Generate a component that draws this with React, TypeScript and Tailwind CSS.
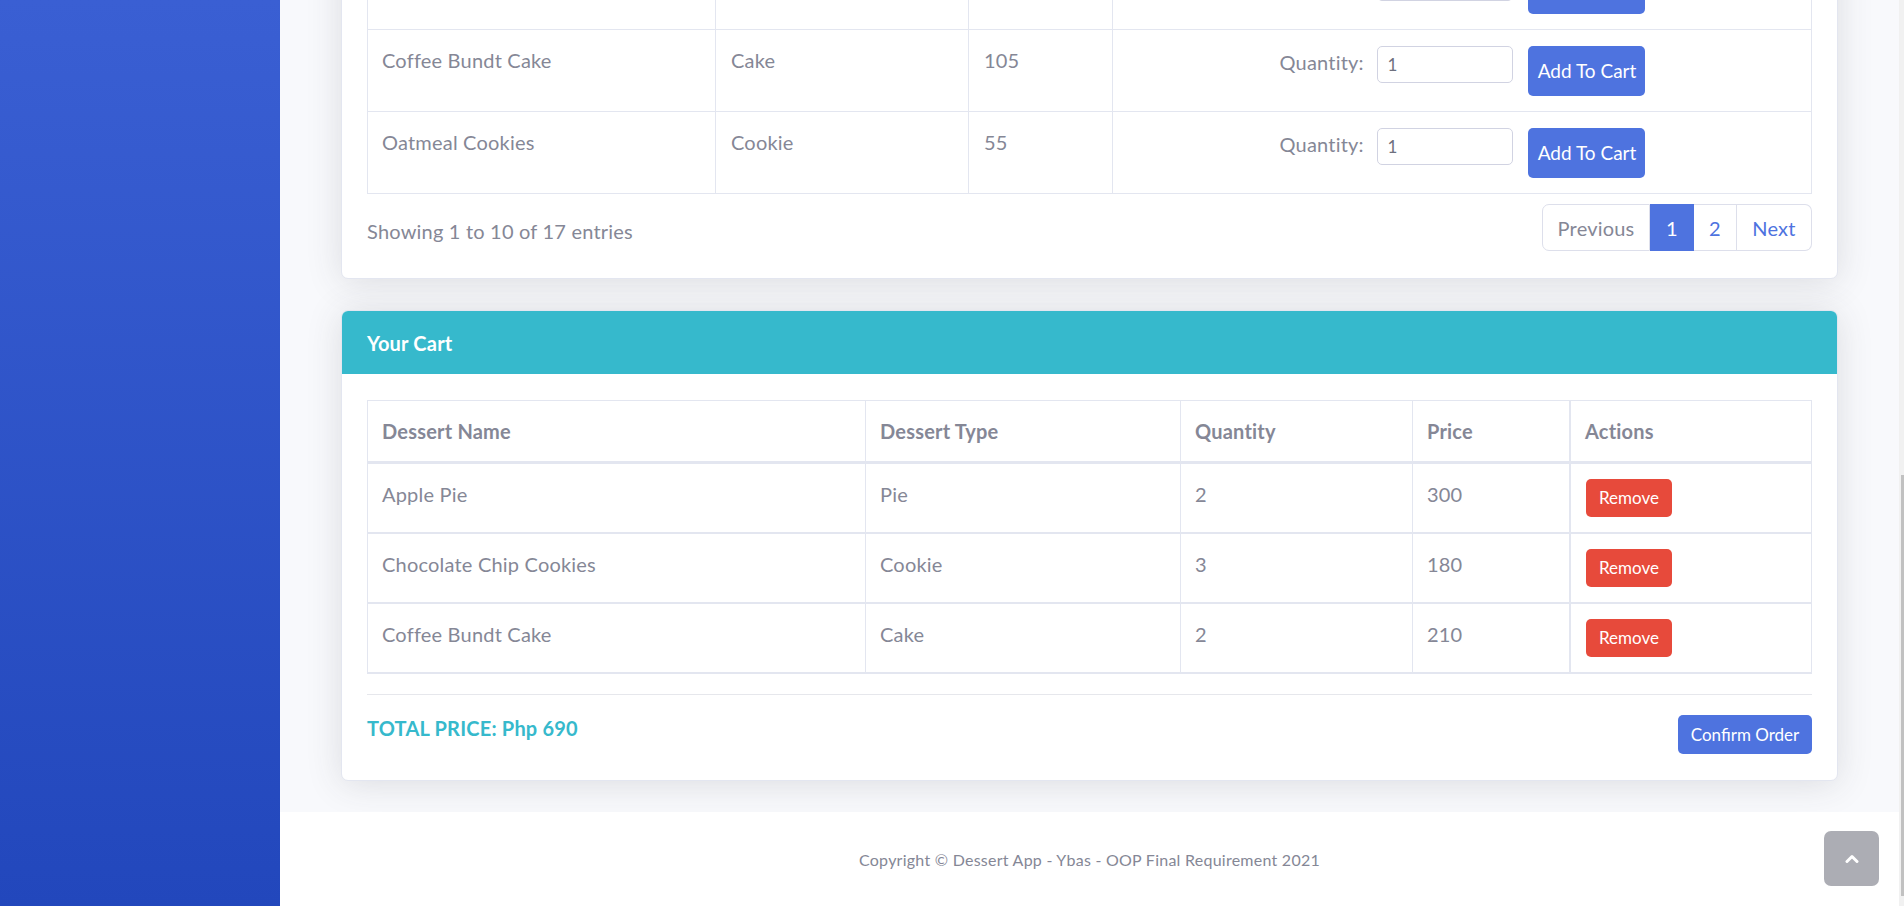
import React from "react";

const FONT = "font-['Lato','Liberation_Sans',sans-serif]";

type Product = { name: string; type: string; price: string; hidden?: boolean };

const products: Product[] = [
  { name: "", type: "", price: "", hidden: true },
  { name: "Coffee Bundt Cake", type: "Cake", price: "105" },
  { name: "Oatmeal Cookies", type: "Cookie", price: "55" },
];

type CartItem = { name: string; type: string; qty: string; price: string };

const cart: CartItem[] = [
  { name: "Apple Pie", type: "Pie", qty: "2", price: "300" },
  { name: "Chocolate Chip Cookies", type: "Cookie", qty: "3", price: "180" },
  { name: "Coffee Bundt Cake", type: "Cake", qty: "2", price: "210" },
];

function ProductRow({ p, last }: { p: Product; last: boolean }) {
  return (
    <div
      className={`grid grid-cols-[348px_253px_144px_1fr] ${
        last ? "h-[81px]" : "h-[82px] border-b border-[#e3e6f0]"
      }`}
    >
      <div className="border-r border-[#e3e6f0] pl-[14px] pt-[15px] leading-[30px]">{p.name}</div>
      <div className="border-r border-[#e3e6f0] pl-[15px] pt-[15px] leading-[30px]">{p.type}</div>
      <div className="border-r border-[#e3e6f0] pl-[15px] pt-[15px] leading-[30px]">{p.price}</div>
      <div className="flex items-start justify-center pt-[16px]">
        <span className={`mt-[1px] h-[30px] w-[81px] text-right leading-[30px] ${p.hidden ? "invisible" : ""}`}>
          {p.hidden ? "" : "Quantity:"}
        </span>
        <div className="ml-[16px] flex h-[37px] w-[136px] items-center rounded-[5px] border border-[#d1d3e2] bg-white pl-[10px] text-[17px] text-[#6e707e]">
          {p.hidden ? "" : "1"}
        </div>
        <button className="ml-[15px] h-[50px] w-[117px] rounded-[5px] bg-[#4e73df] pl-[2px] text-[19px] leading-[30px] tracking-normal text-white">
          {p.hidden ? "" : "Add To Cart"}
        </button>
      </div>
    </div>
  );
}

function CartRow({ c }: { c: CartItem }) {
  return (
    <div className="grid h-[70px] grid-cols-[498px_315px_232px_158px_1fr] border-b-2 border-[#e3e6f0]">
      <div className="border-r border-[#e3e6f0] pl-[14px] pt-[15px] leading-[30px]">{c.name}</div>
      <div className="border-r border-[#e3e6f0] pl-[14px] pt-[15px] leading-[30px]">{c.type}</div>
      <div className="border-r border-[#e3e6f0] pl-[14px] pt-[15px] leading-[30px]">{c.qty}</div>
      <div className="border-r-2 border-[#e3e6f0] pl-[14px] pt-[15px] leading-[30px]">{c.price}</div>
      <div className="pl-[15px] pt-[15px]">
        <button className="h-[38px] w-[86px] rounded-[5px] bg-[#e74a3b] text-[17px] leading-[26px] tracking-normal text-white">
          Remove
        </button>
      </div>
    </div>
  );
}

export default function App() {
  return (
    <div
      className={`flex h-[906px] w-full overflow-hidden bg-white text-[20px] tracking-[0.2px] text-[#858796] ${FONT}`}
    >
      {/* Sidebar */}
      <div className="h-full w-[280px] shrink-0 bg-gradient-to-b from-[#3a5fd3] to-[#2247bc]" />

      {/* Main column */}
      <div className="relative flex min-w-0 flex-1 flex-col">
        <div className="flex flex-col bg-[#f8f9fc] px-[61px] pb-[31px]">
          {/* Products card (scrolled) */}
          <div className="mt-[-79px] rounded-[7px] border border-[#e3e6f0] bg-white px-[25px] pb-[27px] pt-[25px] shadow-[0_3px_35px_0_rgba(58,59,69,0.15)]">
            <div className="border border-[#e3e6f0]">
              {products.map((p, i) => (
                <ProductRow key={i} p={p} last={i === products.length - 1} />
              ))}
            </div>
            <div className="mt-[10px] flex items-start justify-between">
              <div className="mt-[12px] leading-[30px]">Showing 1 to 10 of 17 entries</div>
              <div className="flex h-[47px]">
                <div className="flex w-[108px] items-center justify-center rounded-l-[7px] border border-[#dddfeb] bg-white text-[#858796]">
                  Previous
                </div>
                <div className="flex w-[44px] items-center justify-center border border-[#4e73df] bg-[#4e73df] text-white">
                  1
                </div>
                <div className="flex w-[43px] items-center justify-center border-y border-r border-[#dddfeb] bg-white text-[#4e73df]">
                  2
                </div>
                <div className="flex w-[75px] items-center justify-center rounded-r-[7px] border-y border-r border-[#dddfeb] bg-white text-[#4e73df]">
                  Next
                </div>
              </div>
            </div>
          </div>

          {/* Cart card */}
          <div className="mt-[31px] overflow-hidden rounded-[7px] border border-[#e3e6f0] bg-white shadow-[0_3px_35px_0_rgba(58,59,69,0.15)]">
            <div className="flex h-[63px] items-center bg-[#36b9cc] px-[25px] font-bold text-white">Your Cart</div>
            <div className="px-[25px] pb-[26px] pt-[26px]">
              <div className="border-x border-t border-[#e3e6f0]">
                <div className="grid h-[63px] grid-cols-[498px_315px_232px_158px_1fr] border-b-[3px] border-[#e3e6f0] font-bold">
                  <div className="border-r border-[#e3e6f0] pl-[14px] pt-[15px] leading-[30px]">Dessert Name</div>
                  <div className="border-r border-[#e3e6f0] pl-[14px] pt-[15px] leading-[30px]">Dessert Type</div>
                  <div className="border-r border-[#e3e6f0] pl-[14px] pt-[15px] leading-[30px]">Quantity</div>
                  <div className="border-r-2 border-[#e3e6f0] pl-[14px] pt-[15px] leading-[30px]">Price</div>
                  <div className="pl-[14px] pt-[15px] leading-[30px]">Actions</div>
                </div>
                {cart.map((c) => (
                  <CartRow key={c.name} c={c} />
                ))}
              </div>
              <div className="mt-[20px] h-px bg-[#e6e7ec]" />
              <div className="mt-[20px] flex items-start justify-between">
                <div className="mt-[1px] font-bold leading-[24px] text-[#36b9cc]">TOTAL PRICE: Php 690</div>
                <button className="h-[39px] w-[134px] rounded-[5px] bg-[#4e73df] text-[17px] leading-[26px] tracking-normal text-white">
                  Confirm Order
                </button>
              </div>
            </div>
          </div>
        </div>

        {/* Footer */}
        <div className="flex flex-1 items-start justify-center bg-white pt-[40px] text-[16px] leading-none tracking-[0.25px] text-[#858796]">
          Copyright © Dessert App - Ybas - OOP Final Requirement 2021
        </div>

        {/* Scroll to top */}
        <div className="absolute bottom-[20px] right-[20px] flex h-[55px] w-[55px] items-center justify-center rounded-[7px] bg-[rgba(90,92,105,0.5)]">
          <svg width="14" height="9" viewBox="0 0 14 9" fill="none">
            <polyline points="2,7.5 7,2.5 12,7.5" stroke="white" strokeWidth="3" strokeLinecap="round" strokeLinejoin="round" />
          </svg>
        </div>
      </div>

      {/* Scrollbar */}
      <div className="flex h-full w-[5px] shrink-0 flex-col items-end bg-[#f1f1f1]">
        <div className="h-[475px] shrink-0" />
        <div className="mb-[10px] w-[3px] flex-1 bg-[#c1c1c1]" />
      </div>
    </div>
  );
}
